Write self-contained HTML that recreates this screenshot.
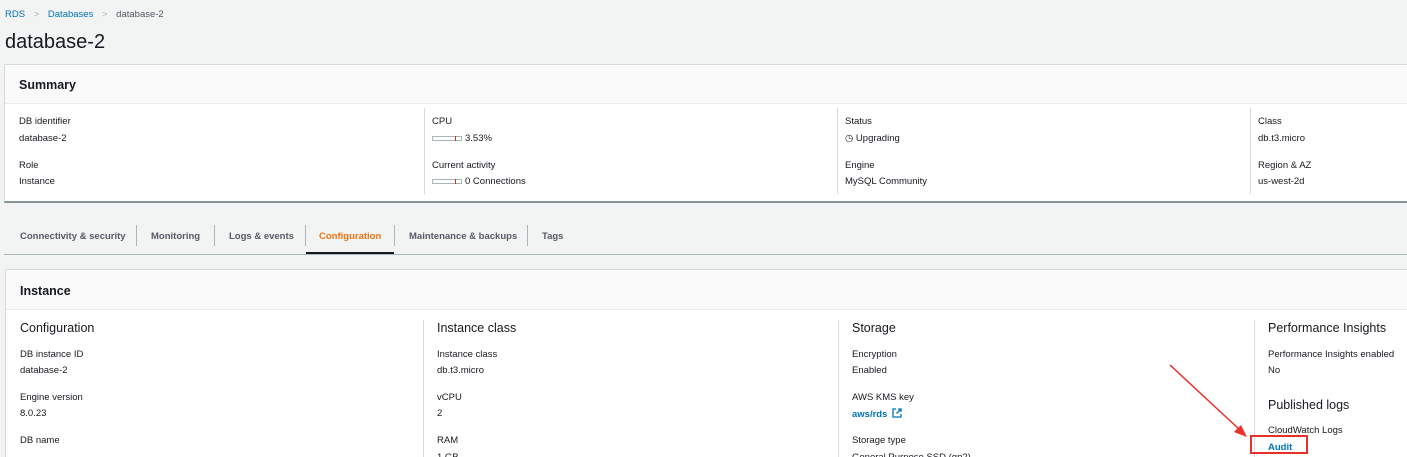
<!DOCTYPE html><html><head><style>
html,body{margin:0;width:1407px;height:457px;overflow:hidden}
body{background:#f2f3f3;font-family:"Liberation Sans",sans-serif;color:#16191f;position:relative}
.a{position:absolute;white-space:nowrap;font-size:9.5px;line-height:12px;margin-top:2px}
.h{font-size:12.5px;font-weight:bold}
.s{font-size:12.5px;margin-top:1px}
.lk{color:#0073bb}
.v{position:absolute;width:1px;background:#d5dbdb}
.bar{display:inline-block;width:28px;height:3px;border:1px solid #aab7b8;vertical-align:middle;margin-right:3px;position:relative}
.bar:after{content:"";position:absolute;left:22px;top:-1px;width:1px;height:5px;background:#d13212}
</style></head><body>
<div class="a" style="left:5px;top:7px;font-size:9.5px"><span class="lk">RDS</span> <span style="color:#aab7b8;margin:0 6px">&gt;</span> <span class="lk">Databases</span> <span style="color:#aab7b8;margin:0 6px">&gt;</span> <span style="color:#545b64">database-2</span></div>
<div class="a" style="left:5px;top:28px;font-size:20px;line-height:24px">database-2</div>

<div style="position:absolute;left:4px;top:64px;width:1410px;height:136px;background:#fff;border:1px solid #d5dbdb;border-bottom:2px solid #879596"></div>
<div style="position:absolute;left:5px;top:65px;width:1410px;height:38px;background:#fafafa;border-bottom:1px solid #eaeded"></div>
<div class="a h" style="left:19px;top:77px">Summary</div>
<div class="v" style="left:424px;top:108px;height:86px"></div>
<div class="v" style="left:837px;top:108px;height:86px"></div>
<div class="v" style="left:1250px;top:108px;height:86px"></div>
<div class="a" style="left:19px;top:114px">DB identifier</div><div class="a" style="left:19px;top:131px">database-2</div>
<div class="a" style="left:19px;top:158px">Role</div><div class="a" style="left:19px;top:174px">Instance</div>
<div class="a" style="left:432px;top:114px">CPU</div><div class="a" style="left:432px;top:131px"><span class="bar"></span>3.53%</div>
<div class="a" style="left:432px;top:158px">Current activity</div><div class="a" style="left:432px;top:174px"><span class="bar"></span>0 Connections</div>
<div class="a" style="left:845px;top:114px">Status</div><div class="a" style="left:845px;top:131px">&#9719; Upgrading</div>
<div class="a" style="left:845px;top:158px">Engine</div><div class="a" style="left:845px;top:174px">MySQL Community</div>
<div class="a" style="left:1258px;top:114px">Class</div><div class="a" style="left:1258px;top:131px">db.t3.micro</div>
<div class="a" style="left:1258px;top:158px">Region &amp; AZ</div><div class="a" style="left:1258px;top:174px">us-west-2d</div>

<div style="position:absolute;left:4px;top:254px;width:1410px;height:1px;background:#aab7b8"></div>
<div class="a" style="left:20px;top:229px;font-weight:bold;color:#545b64">Connectivity &amp; security</div>
<div class="a" style="left:151px;top:229px;font-weight:bold;color:#545b64">Monitoring</div>
<div class="a" style="left:229px;top:229px;font-weight:bold;color:#545b64">Logs &amp; events</div>
<div class="a" style="left:319px;top:229px;font-weight:bold;color:#ec7211">Configuration</div>
<div class="a" style="left:409px;top:229px;font-weight:bold;color:#545b64">Maintenance &amp; backups</div>
<div class="a" style="left:542px;top:229px;font-weight:bold;color:#545b64">Tags</div>
<div class="v" style="left:136px;top:225px;height:21px;background:#aab7b8"></div>
<div class="v" style="left:214px;top:225px;height:21px;background:#aab7b8"></div>
<div class="v" style="left:305px;top:225px;height:21px;background:#aab7b8"></div>
<div class="v" style="left:394px;top:225px;height:21px;background:#aab7b8"></div>
<div class="v" style="left:527px;top:225px;height:21px;background:#aab7b8"></div>
<div style="position:absolute;left:306px;top:252px;width:88px;height:2px;background:#16191f"></div>

<div style="position:absolute;left:5px;top:269px;width:1410px;height:200px;background:#fff;border:1px solid #d5dbdb"></div>
<div style="position:absolute;left:6px;top:270px;width:1410px;height:39px;background:#fafafa;border-bottom:1px solid #eaeded"></div>
<div class="a h" style="left:20px;top:283px">Instance</div>
<div class="v" style="left:423px;top:320px;height:140px"></div>
<div class="v" style="left:838px;top:320px;height:140px"></div>
<div class="v" style="left:1254px;top:320px;height:140px"></div>
<div class="a s" style="left:20px;top:320px;line-height:14px">Configuration</div>
<div class="a" style="left:20px;top:347px">DB instance ID</div><div class="a" style="left:20px;top:363px">database-2</div>
<div class="a" style="left:20px;top:390px">Engine version</div><div class="a" style="left:20px;top:406px">8.0.23</div>
<div class="a" style="left:20px;top:433px">DB name</div>
<div class="a s" style="left:437px;top:320px;line-height:14px">Instance class</div>
<div class="a" style="left:437px;top:347px">Instance class</div><div class="a" style="left:437px;top:363px">db.t3.micro</div>
<div class="a" style="left:437px;top:390px">vCPU</div><div class="a" style="left:437px;top:406px">2</div>
<div class="a" style="left:437px;top:433px">RAM</div><div class="a" style="left:437px;top:450px">1 GB</div>
<div class="a s" style="left:852px;top:320px;line-height:14px">Storage</div>
<div class="a" style="left:852px;top:347px">Encryption</div><div class="a" style="left:852px;top:363px">Enabled</div>
<div class="a" style="left:852px;top:390px">AWS KMS key</div><div class="a lk" style="left:852px;top:406px;font-weight:bold">aws/rds <svg width="10" height="10" viewBox="0 0 10 10" style="vertical-align:-1px;margin-left:2px"><path d="M4 1H1v8h8V6M6 1h3v3M9 1L4.5 5.5" fill="none" stroke="#0073bb" stroke-width="1.3"/></svg></div>
<div class="a" style="left:852px;top:433px">Storage type</div><div class="a" style="left:852px;top:450px">General Purpose SSD (gp2)</div>
<div class="a s" style="left:1268px;top:320px;line-height:14px">Performance Insights</div>
<div class="a" style="left:1268px;top:347px">Performance Insights enabled</div><div class="a" style="left:1268px;top:363px">No</div>
<div class="a s" style="left:1268px;top:397px;line-height:14px">Published logs</div>
<div class="a" style="left:1268px;top:423px">CloudWatch Logs</div>
<div class="a lk" style="left:1268px;top:440px;font-weight:bold">Audit</div>
<div style="position:absolute;left:1250px;top:435px;width:58px;height:19px;border:2px solid #e8302a;box-sizing:border-box"></div>
<svg style="position:absolute;left:0;top:0" width="1407" height="457"><line x1="1170" y1="365" x2="1240" y2="430" stroke="#e8302a" stroke-width="1.5"/><polygon points="1247,437 1234,432 1241,425" fill="#e8302a"/></svg>
</body></html>
